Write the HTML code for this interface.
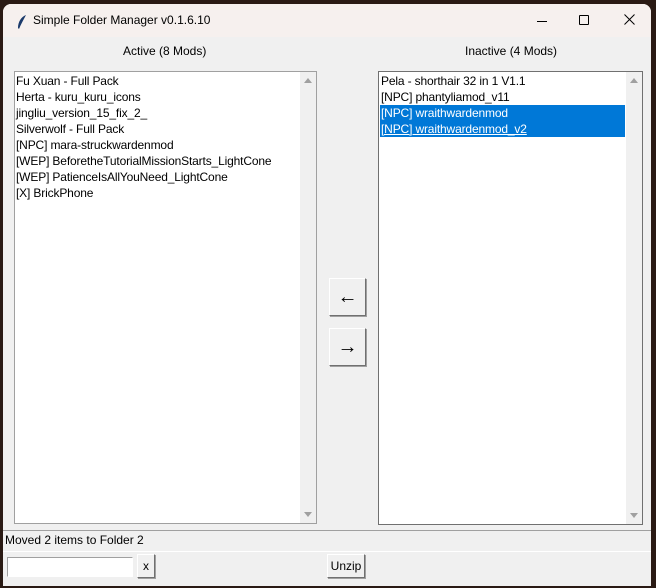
<!DOCTYPE html>
<html><head><style>
*{margin:0;padding:0;box-sizing:border-box}
body{width:656px;height:588px;background:#2a1a14;font-family:"Liberation Sans",sans-serif;font-size:12px;color:#000;position:relative;overflow:hidden}
.win{position:absolute;left:3px;top:4px;width:648px;height:582px;background:#f0f0f0;border-radius:8px 8px 0 0;overflow:hidden}
.title{position:absolute;left:0;top:0;width:100%;height:33px;background:#f6f0ee}
.abs{position:absolute}
.lb{position:absolute;background:#fff;border:1px solid #a0a0a0}
.it{height:16px;line-height:16px;padding-left:1px;white-space:nowrap;letter-spacing:-0.15px}
.sb{position:absolute;right:0;top:0;width:16px;bottom:0;background:#f0f0f0}
.btn{position:absolute;background:#f0f0f0;border:1px solid #fff;border-right-color:#707070;border-bottom-color:#707070;box-shadow:1px 1px 0 #a0a0a0;text-align:center}
.sel{background:#0078d7;color:#fff}
</style></head><body>
<div class="win">
<div class="title">
<svg class="abs" style="left:13px;top:10px" width="12" height="16" viewBox="0 0 12 16"><path d="M10 1 C5 3 2 8 2 14 L3 15 C5 10 8 5 10 1Z" fill="#1b3a6b"/></svg>
<div class="abs" style="left:30px;top:9px;font-size:12px">Simple Folder Manager v0.1.6.10</div>
<div class="abs" style="left:534px;top:17px;width:10px;height:1px;background:#000"></div>
<div class="abs" style="left:576px;top:11px;width:10px;height:10px;border:1px solid #000;border-radius:1px"></div>
<svg class="abs" style="left:621px;top:10px" width="11" height="11"><path d="M0.5 0.5L10.5 10.5M10.5 0.5L0.5 10.5" stroke="#000" stroke-width="1"/></svg>
</div>
<div class="abs" style="left:120px;top:40px">Active (8 Mods)</div>
<div class="abs" style="left:462px;top:40px">Inactive (4 Mods)</div>
<div class="lb" style="left:11px;top:67px;width:303px;height:453px;padding-top:1px;padding-left:0">
<div class="it">Fu Xuan - Full Pack</div>
<div class="it">Herta - kuru_kuru_icons</div>
<div class="it">jingliu_version_15_fix_2_</div>
<div class="it">Silverwolf - Full Pack</div>
<div class="it">[NPC] mara-struckwardenmod</div>
<div class="it">[WEP] BeforetheTutorialMissionStarts_LightCone</div>
<div class="it">[WEP] PatienceIsAllYouNeed_LightCone</div>
<div class="it">[X] BrickPhone</div>
<div class="sb"><div class="abs" style="left:4px;top:6px;border:4px solid transparent;border-bottom:5px solid #a0a0a0;border-top:0"></div><div class="abs" style="left:4px;bottom:6px;border:4px solid transparent;border-top:5px solid #a0a0a0;border-bottom:0"></div></div>
</div>
<div class="lb" style="left:375px;top:67px;width:265px;height:454px;padding:1px 0 0 1px;border-color:#707070">
<div class="it">Pela - shorthair 32 in 1 V1.1</div>
<div class="it">[NPC] phantyliamod_v11</div>
<div class="it sel" style="margin-right:17px">[NPC] wraithwardenmod</div>
<div class="it sel" style="margin-right:17px"><u>[NPC] wraithwardenmod_v2</u></div>
<div class="sb"><div class="abs" style="left:4px;top:6px;border:4px solid transparent;border-bottom:5px solid #a0a0a0;border-top:0"></div><div class="abs" style="left:4px;bottom:6px;border:4px solid transparent;border-top:5px solid #a0a0a0;border-bottom:0"></div></div>
</div>
<div class="btn" style="left:326px;top:274px;width:37px;height:38px;line-height:36px;font-size:20px">←</div>
<div class="btn" style="left:326px;top:324px;width:37px;height:38px;line-height:36px;font-size:20px">→</div>
<div class="abs" style="left:0;top:526px;width:648px;height:1px;background:#a0a0a0"></div>
<div class="abs" style="left:2px;top:529px">Moved 2 items to Folder 2</div>
<div class="abs" style="left:0;top:547px;width:648px;height:1px;background:#fff"></div>
<div class="abs" style="left:4px;top:553px;width:126px;height:20px;background:#fff;border:1px solid #a0a0a0;border-right-color:#fff;border-bottom-color:#fff"></div>
<div class="btn" style="left:134px;top:550px;width:18px;height:24px;line-height:22px">x</div>
<div class="btn" style="left:324px;top:550px;width:38px;height:24px;line-height:22px">Unzip</div>
</div>
</body></html>
